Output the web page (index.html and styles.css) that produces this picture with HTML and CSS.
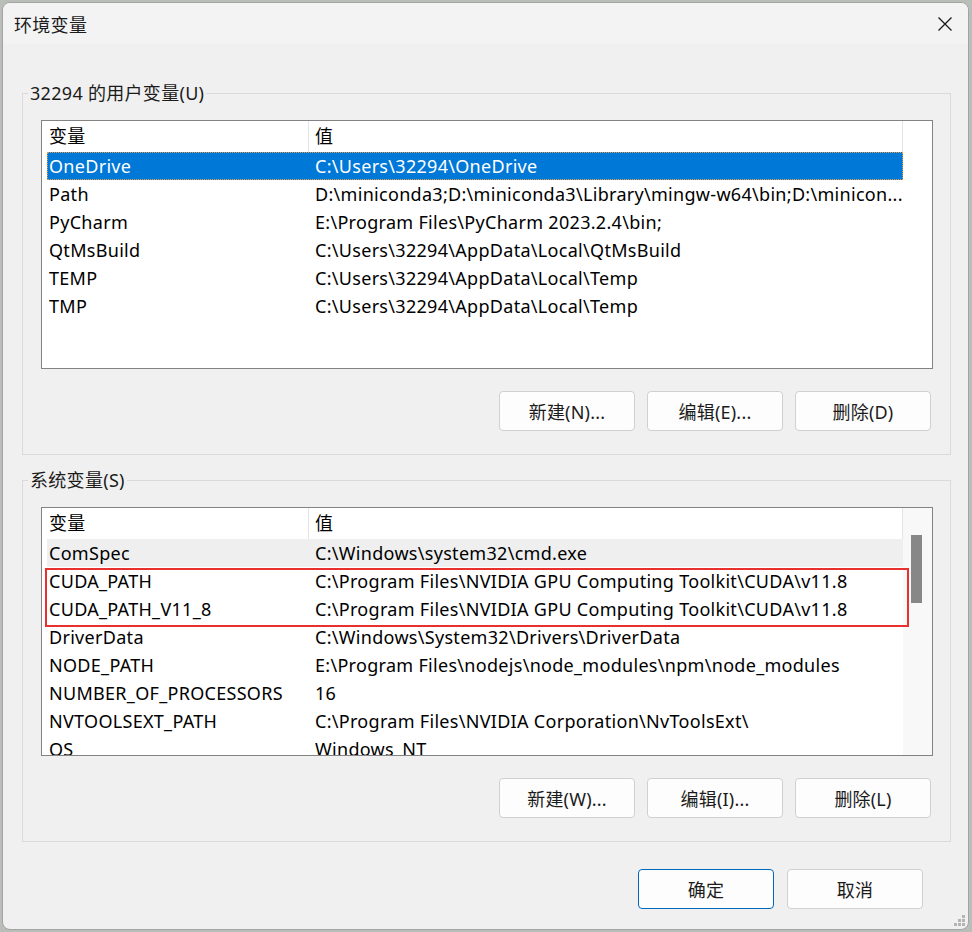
FILE: index.html
```html
<!DOCTYPE html>
<html lang="zh-CN">
<head>
<meta charset="UTF-8">
<title>环境变量</title>
<link rel="stylesheet" href="styles.css">
</head>
<body>
<div class="window">
    <div class="titlebar">
        <span class="title">环境变量</span>
        <button class="close" aria-label="关闭">
            <svg width="16" height="16" viewBox="0 0 16 16"><path d="M1.5 1.5 L14.5 14.5 M14.5 1.5 L1.5 14.5" stroke="#1b1b1b" stroke-width="1.3" fill="none"/></svg>
        </button>
    </div>
    <div class="content">
        <fieldset class="group">
            <legend>32294 的用户变量(U)</legend>
            <div class="list">
                <div class="list-main">
                    <div class="list-head">
                        <div class="head-name">变量</div>
                        <div class="head-value">值</div>
                    </div>
                    <div class="row selected"><div class="name">OneDrive</div><div class="value">C:\Users\32294\OneDrive</div></div>
                    <div class="row"><div class="name">Path</div><div class="value">D:\miniconda3;D:\miniconda3\Library\mingw-w64\bin;D:\minicon...</div></div>
                    <div class="row"><div class="name">PyCharm</div><div class="value">E:\Program Files\PyCharm 2023.2.4\bin;</div></div>
                    <div class="row"><div class="name">QtMsBuild</div><div class="value">C:\Users\32294\AppData\Local\QtMsBuild</div></div>
                    <div class="row"><div class="name">TEMP</div><div class="value">C:\Users\32294\AppData\Local\Temp</div></div>
                    <div class="row"><div class="name">TMP</div><div class="value">C:\Users\32294\AppData\Local\Temp</div></div>
                </div>
                <div class="list-side"></div>
            </div>
            <div class="actions">
                <button class="btn">新建(N)...</button>
                <button class="btn">编辑(E)...</button>
                <button class="btn">删除(D)</button>
            </div>
        </fieldset>

        <fieldset class="group system">
            <legend>系统变量(S)</legend>
            <div class="list">
                <div class="list-main">
                    <div class="list-head">
                        <div class="head-name">变量</div>
                        <div class="head-value">值</div>
                    </div>
                    <div class="row inactive"><div class="name">ComSpec</div><div class="value">C:\Windows\system32\cmd.exe</div></div>
                    <div class="row"><div class="name">CUDA_PATH</div><div class="value">C:\Program Files\NVIDIA GPU Computing Toolkit\CUDA\v11.8</div></div>
                    <div class="row"><div class="name">CUDA_PATH_V11_8</div><div class="value">C:\Program Files\NVIDIA GPU Computing Toolkit\CUDA\v11.8</div></div>
                    <div class="row"><div class="name">DriverData</div><div class="value">C:\Windows\System32\Drivers\DriverData</div></div>
                    <div class="row"><div class="name">NODE_PATH</div><div class="value">E:\Program Files\nodejs\node_modules\npm\node_modules</div></div>
                    <div class="row"><div class="name">NUMBER_OF_PROCESSORS</div><div class="value">16</div></div>
                    <div class="row"><div class="name">NVTOOLSEXT_PATH</div><div class="value">C:\Program Files\NVIDIA Corporation\NvToolsExt\</div></div>
                    <div class="row"><div class="name">OS</div><div class="value">Windows_NT</div></div>
                </div>
                <div class="list-side scrollbar"><div class="thumb"></div></div>
                <!-- 标注框 -->
                <div class="mark"></div>
            </div>
            <div class="actions">
                <button class="btn">新建(W)...</button>
                <button class="btn">编辑(I)...</button>
                <button class="btn">删除(L)</button>
            </div>
        </fieldset>

        <div class="footer">
            <button class="btn primary">确定</button>
            <button class="btn">取消</button>
        </div>
    </div>
    <svg class="grip" width="12" height="12" viewBox="0 0 12 12">
        <rect x="8" y="0" width="3" height="3" fill="#b4b4b4"/>
        <rect x="4" y="4" width="3" height="3" fill="#b4b4b4"/>
        <rect x="8" y="4" width="3" height="3" fill="#b4b4b4"/>
        <rect x="0" y="8" width="3" height="3" fill="#b4b4b4"/>
        <rect x="4" y="8" width="3" height="3" fill="#b4b4b4"/>
        <rect x="8" y="8" width="3" height="3" fill="#b4b4b4"/>
    </svg>
</div>
</body>
</html>
```

FILE: styles.css
```css
body {
    margin: 0;
    background-color: #b9beb8;
    font-family: "Noto Sans", "Noto Sans CJK SC", sans-serif;
    color: #000;
    letter-spacing: 0.3px;
}
.window {
    position: relative;
    box-sizing: border-box;
    margin: 2px 3px 0 2px;
    height: 928px;
    background-color: #f0f0f0;
    border: 1px solid #a3a3a3;
    border-radius: 8px;
    overflow: hidden;
}
.titlebar {
    height: 41px;
    display: flex;
    align-items: center;
    justify-content: space-between;
    padding-left: 11px;
    background-color: #f3f3f3;
}
.title {
    font-size: 18px;
    color: #1b1b1b;
}
.close {
    width: 46px;
    height: 41px;
    border: 0;
    background: transparent;
    display: flex;
    align-items: center;
    justify-content: center;
    padding: 0;
}
.content {
    padding: 0 17px 0 19px;
}
.group {
    margin: 37px 0 0;
    padding: 15px 17px 23px 18px;
    border: 1px solid #dadada;
    min-width: 0;
}
.group.system {
    margin-top: 13px;
}
.group legend {
    margin-left: -13px;
    padding: 0 2px;
    font-size: 18px;
    line-height: 24px;
    color: #1b1b1b;
}
.list {
    position: relative;
    display: flex;
    height: 249px;
    box-sizing: border-box;
    border: 1px solid #838383;
    background-color: #fff;
    overflow: hidden;
}
.list-main {
    width: 861px;
    flex-shrink: 0;
}
.list-side {
    flex-grow: 1;
}
.list-head {
    display: flex;
    height: 31px;
    font-size: 18px;
    line-height: 31px;
}
.head-name {
    width: 259px;
    padding-left: 7px;
    border-right: 1px solid #e5e5e5;
}
.head-value {
    flex-grow: 1;
    padding-left: 6px;
    border-right: 1px solid #e5e5e5;
}
.row {
    display: flex;
    height: 28px;
    margin-left: 5px;
    font-size: 18px;
    line-height: 28px;
    white-space: nowrap;
}
.row .name {
    width: 259px;
    padding-left: 2px;
    overflow: hidden;
}
.row .value {
    flex-grow: 1;
    padding-left: 7px;
    overflow: hidden;
}
.row.selected {
    background-color: #0078d7;
    color: #fff;
    outline: 1px dotted #e8a04a;
    outline-offset: -1px;
}
.row.inactive {
    background-color: #efefef;
}
.scrollbar {
    background-color: #f8f8f8;
    padding-top: 27px;
}
.thumb {
    width: 11px;
    height: 68px;
    margin-left: 8px;
    background-color: #878787;
}
.mark {
    position: absolute;
    left: 3px;
    top: 60px;
    width: 864px;
    height: 59px;
    box-sizing: border-box;
    border: 2px solid #e8302f;
}
.actions {
    display: flex;
    justify-content: flex-end;
    gap: 12px;
    margin: 22px 2px 0 0;
}
.btn {
    width: 136px;
    height: 40px;
    box-sizing: border-box;
    border: 1px solid #d0d0d0;
    border-radius: 4px;
    background-color: #fdfdfd;
    font-family: "Noto Sans", "Noto Sans CJK SC", sans-serif;
    font-size: 18px;
    letter-spacing: 0.2px;
    color: #1b1b1b;
    padding: 0;
}
.btn.primary {
    border-color: #0067c0;
}
.footer {
    display: flex;
    justify-content: flex-end;
    gap: 13px;
    margin: 27px 28px 0 0;
}
.grip {
    position: absolute;
    right: 2px;
    bottom: 2px;
}
```
